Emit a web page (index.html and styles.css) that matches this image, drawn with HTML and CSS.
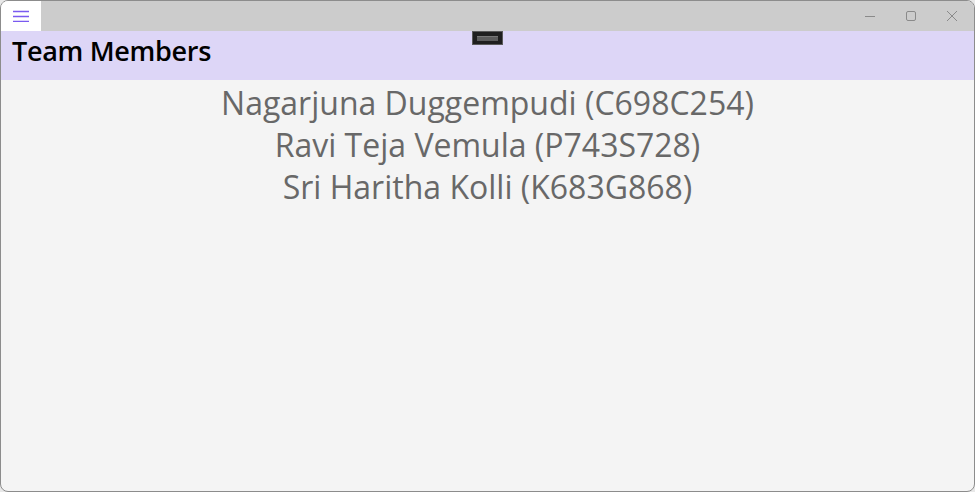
FILE: index.html
```html
<!DOCTYPE html>
<html>
<head>
<meta charset="utf-8">
<link rel="stylesheet" href="styles.css">
</head>
<body>
<div class="window">
  <div class="titlebar">
    <div class="menu-btn">
      <svg width="16" height="12" viewBox="0 0 16 12"><path d="M0 1.5H16M0 6.5H16M0 11.5H16" stroke="#7a5af0" stroke-width="1.5"/></svg>
    </div>
    <div class="drag"></div>
    <div class="caption">
      <div class="cap-btn"><svg width="12" height="12" viewBox="0 0 12 12"><path d="M1 6.5H11" stroke="#8a8a8a" stroke-width="1"/></svg></div>
      <div class="cap-btn"><svg width="12" height="12" viewBox="0 0 12 12"><rect x="1.5" y="1.5" width="9" height="9" rx="1.5" fill="none" stroke="#8a8a8a" stroke-width="1"/></svg></div>
      <div class="cap-btn"><svg width="12" height="12" viewBox="0 0 12 12"><path d="M1 1L11 11M11 1L1 11" stroke="#8a8a8a" stroke-width="1"/></svg></div>
    </div>
  </div>
  <div class="header">
    <h1 class="title">Team Members</h1>
    <div class="debug-bar"><span></span></div>
  </div>
  <div class="content">
    <div class="member">Nagarjuna Duggempudi (C698C254)</div>
    <div class="member">Ravi Teja Vemula (P743S728)</div>
    <div class="member">Sri Haritha Kolli (K683G868)</div>
  </div>
</div>
</body>
</html>
```
FILE: styles.css
```css
html, body {
  margin: 0;
  padding: 0;
  height: 100%;
  background: #e8e8e8;
  overflow: hidden;
}
.window {
  box-sizing: border-box;
  height: 492px;
  width: 975px;
  border: 1px solid #8c8c8c;
  border-radius: 8px;
  overflow: hidden;
  display: flex;
  flex-direction: column;
  background: #f4f4f4;
}
.titlebar {
  height: 30px;
  background: #cccccc;
  display: flex;
  align-items: stretch;
}
.menu-btn {
  width: 40px;
  background: #ffffff;
  display: flex;
  align-items: center;
  justify-content: center;
}
.drag { flex: 1; }
.caption {
  display: flex;
  padding-right: 2px;
}
.cap-btn {
  width: 41px;
  display: flex;
  align-items: center;
  justify-content: center;
}
.header {
  position: relative;
  height: 49px;
  box-sizing: border-box;
  background: #ddd6f7;
  display: flex;
  align-items: center;
  padding-left: 11px;
  padding-bottom: 10px;
}
.title {
  margin: 0;
  font-family: "Open Sans", "Noto Sans", sans-serif;
  font-weight: 600;
  font-size: 27px;
  color: #000000;
  letter-spacing: -0.3px;
}
.debug-bar {
  position: absolute;
  left: 471px;
  top: 0;
  width: 31px;
  height: 14px;
  box-sizing: border-box;
  background: #1f1f1f;
  border: 1px solid #5a5a5a;
  display: flex;
  align-items: center;
  justify-content: center;
}
.debug-bar span {
  width: 21px;
  height: 4px;
  background: #5c5c5c;
  border-top: 1px solid #777;
}
.content {
  flex: 1;
  display: flex;
  flex-direction: column;
  align-items: center;
  padding-top: 2px;
}
.member {
  font-family: "Open Sans", "Noto Sans", sans-serif;
  font-size: 32px;
  line-height: 42px;
  color: #686868;
}
```
